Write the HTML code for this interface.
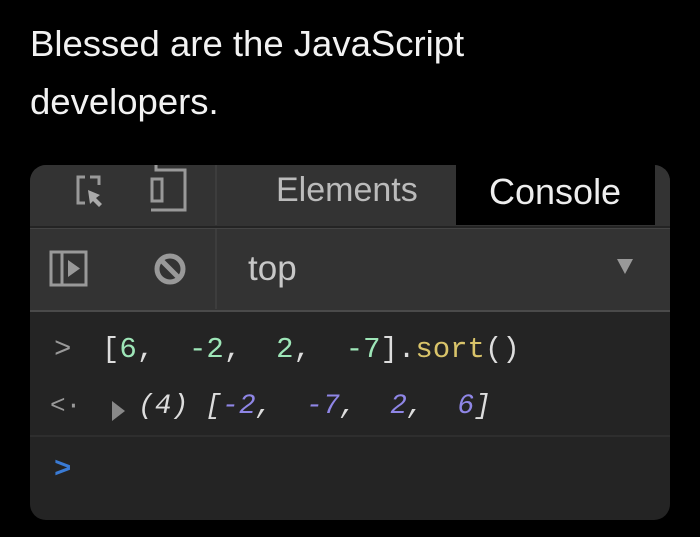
<!DOCTYPE html>
<html><head><style>
body{margin:0;width:700px;height:537px;background:#000;overflow:hidden;font-family:"Liberation Sans",sans-serif;position:relative}
.t{position:absolute;left:30px;color:#f2f2f2;font-size:36.5px;line-height:1}
.panel{position:absolute;left:30px;top:165px;width:640px;height:355px;background:#242424;border-radius:16px;overflow:hidden}
.tabs{position:absolute;left:0;top:0;width:640px;height:61px;background:#333}
.tool{position:absolute;left:0;top:63px;width:640px;height:81px;background:#333;border-top:1px solid #444;border-bottom:2px solid #4a4a4a}
.con{position:absolute;left:426px;top:0;width:199px;height:60px;background:#000}
.lbl{position:absolute;font-size:33px;color:#d0d0d0}
.code{position:absolute;font-family:"Liberation Mono",monospace;font-size:29px;color:#ddd;white-space:pre}
.g{color:#9ee6b8}.y{color:#d9c46a}.p{color:#8f86e6}
</style></head><body>
<div class="t" style="top:26px">Blessed are the JavaScript</div>
<div class="t" style="top:84px">developers.</div>
<div class="panel">
 <div class="tabs">
  <svg style="position:absolute;left:0;top:0" width="200" height="60">
   <path d="M55 12 H48 V38 H55 M60 12 H69 V20" stroke="#999" stroke-width="3" fill="none"/>
   <path d="M58 25 L70 30 L66 33 L72 39 L69 42 L63 36 L60 39 Z" fill="#aaa"/>
   <rect x="122" y="14" width="10" height="22" stroke="#999" stroke-width="3" fill="none"/>
   <path d="M121 45 H155 V5 H126 V0" stroke="#999" stroke-width="3" fill="none"/>
   <line x1="186" y1="0" x2="186" y2="60" stroke="#3d3d3d" stroke-width="2"/>
  </svg>
  <div class="con"></div>
  <div class="lbl" style="left:246px;top:6px;color:#bbb;font-size:34px">Elements</div>
  <div class="lbl" style="left:459px;top:6px;color:#eee;font-size:36px">Console</div>
 </div>
 <div class="tool">
  <svg style="position:absolute;left:0;top:0" width="640" height="80">
   <rect x="21" y="23" width="35" height="33" stroke="#999" stroke-width="3" fill="none"/>
   <line x1="32" y1="23" x2="32" y2="56" stroke="#999" stroke-width="3"/>
   <path d="M38 31 L50 39.5 L38 48 Z" fill="#999"/>
   <circle cx="140" cy="40" r="13" stroke="#999" stroke-width="5" fill="none"/>
   <line x1="131" y1="31" x2="149" y2="49" stroke="#999" stroke-width="5"/>
   <line x1="186" y1="0" x2="186" y2="80" stroke="#3d3d3d" stroke-width="2"/>
   <path d="M587 30 H603 L595 45 Z" fill="#999"/>
  </svg>
  <div class="lbl" style="left:218px;top:20px;color:#c8c8c8;font-size:35px">top</div>
 </div>
 <div style="position:absolute;left:0;top:270px;width:640px;height:2px;background:#2e2e2e"></div>
 <div class="code" style="left:24px;top:168px;color:#999">&gt;</div>
 <div class="code" style="left:72px;top:168px">[<span class="g">6</span>,  <span class="g">-2</span>,  <span class="g">2</span>,  <span class="g">-7</span>].<span class="y">sort</span>()</div>
 <div class="code" style="left:20px;top:226px;color:#999;font-size:26px">&lt;·</div>
 <svg style="position:absolute;left:82px;top:236px" width="14" height="20"><path d="M0 0 L13 10 L0 20 Z" fill="#888"/></svg>
 <div class="code" style="left:108px;top:226px;font-style:italic;font-size:28px">(4) [<span class="p">-2</span>,  <span class="p">-7</span>,  <span class="p">2</span>,  <span class="p">6</span>]</div>
 <div class="code" style="left:24px;top:288px;color:#3a7bd5;font-weight:bold">&gt;</div>
</div>
</body></html>
